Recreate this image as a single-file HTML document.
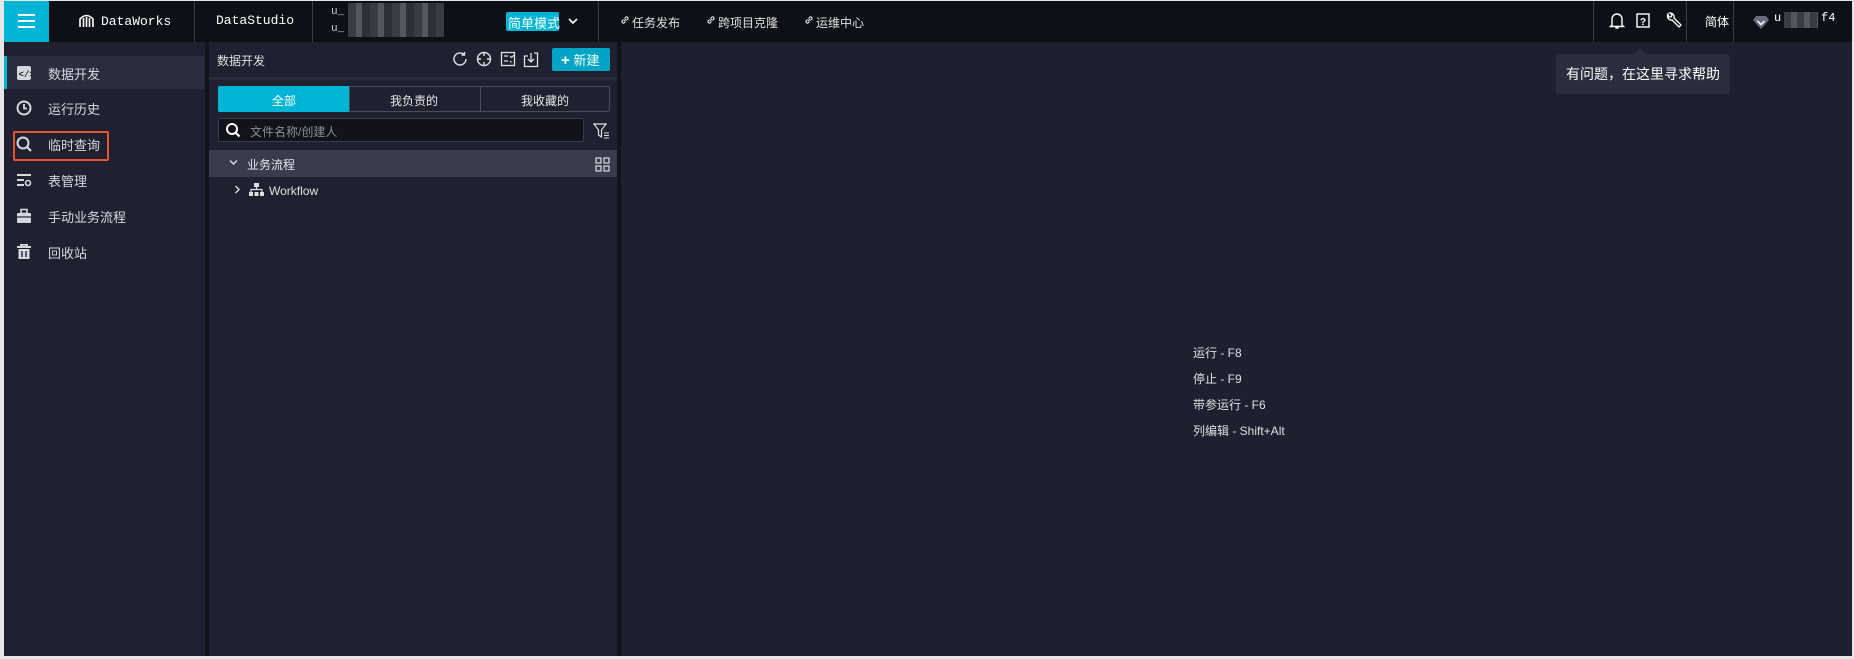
<!DOCTYPE html>
<html><head><meta charset="utf-8"><style>
*{box-sizing:border-box;margin:0;padding:0}
body{width:1854px;height:659px;background:#e6e6e6;font-family:"Liberation Sans","Noto Sans CJK SC",sans-serif;color:#d6d8e0;font-size:12px;position:relative;overflow:hidden}
.abs{position:absolute}
#app{position:absolute;left:4px;top:1px;width:1848px;height:655px;background:#1e2030;overflow:hidden}
#top{position:absolute;left:0;top:0;width:1848px;height:41px;background:#0e1018}
.sep{position:absolute;top:0;width:1px;height:41px;background:#3a3c48}
.t{position:absolute;white-space:nowrap}
.mono{font-family:"Liberation Mono","DejaVu Sans Mono",monospace}
#side{position:absolute;left:0;top:41px;width:201px;height:614px;background:#1f2130}
.it{position:absolute;left:0;width:201px;height:33px;font-size:13px}
.it span{position:absolute;left:44px;top:8px}
.it svg{position:absolute;left:12px;top:9px}
#div1{position:absolute;left:201px;top:41px;width:4px;height:614px;background:#12131b}
#panel{position:absolute;left:205px;top:41px;width:408px;height:614px;background:#1f2130}
#div2{position:absolute;left:613px;top:41px;width:4px;height:614px;background:#12131b}
#ed{position:absolute;left:617px;top:41px;right:0;height:614px;background:#1e2030}
.lk{position:absolute;top:14px}
</style></head><body>
<div id="app">
<div id="top">
  <div class="abs" style="left:0;top:0;width:45px;height:41px;background:#00b4d6"></div>
  <div class="abs" style="left:14px;top:13px;width:17px;height:2px;background:#fff"></div>
  <div class="abs" style="left:14px;top:19px;width:17px;height:2px;background:#fff"></div>
  <div class="abs" style="left:14px;top:25px;width:17px;height:2px;background:#fff"></div>
  <svg class="abs" style="left:75px;top:13px" width="15" height="14" viewBox="0 0 15 14"><path d="M1 13V5Q7.5 -2 14 5V13M4.5 13V4M7.5 13V3M10.5 13V4" stroke="#fff" stroke-width="1.6" fill="none"/></svg>
  <div class="t mono" style="left:97px;top:13px;font-size:13px;color:#fff">DataWorks</div>
  <div class="sep" style="left:190px"></div>
  <div class="t mono" style="left:212px;top:12px;font-size:13px;color:#fff">DataStudio</div>
  <div class="sep" style="left:308px"></div>
  <div class="t mono" style="left:327px;top:5px;font-size:11px;color:#ccc">u_</div>
  <div class="t mono" style="left:327px;top:22px;font-size:11px;color:#ccc">u_</div>
  <div class="abs" style="left:344px;top:2px;width:96px;height:34px;background:repeating-linear-gradient(90deg,#3a3c44 0 8px,#55575e 8px 14px,#2e3038 14px 22px)"></div>
  <div class="abs" style="left:502px;top:11px;width:53px;height:19px;background:#00b4d6;border-radius:2px"></div>
  <div class="t" style="left:504px;top:12px;font-size:13px;color:#fff">简单模式</div>
  <svg class="abs" style="left:564px;top:16px" width="10" height="8"><path d="M1 2l4 4 4-4" stroke="#fff" stroke-width="1.6" fill="none"/></svg>
  <div class="sep" style="left:594px"></div>
  <svg class="lk" style="left:616px" width="10" height="10"><path d="M4 6l2-2M3.5 4.5L2 6a1.6 1.6 0 0 0 2 2l1.5-1.5M6.5 5.5L8 4a1.6 1.6 0 0 0-2-2L4.5 3.5" stroke="#e0e0e0" stroke-width="1.2" fill="none"/></svg>
  <div class="t" style="left:628px;top:13px;font-size:12px;color:#e0e0e0">任务发布</div>
  <svg class="lk" style="left:702px" width="10" height="10"><path d="M4 6l2-2M3.5 4.5L2 6a1.6 1.6 0 0 0 2 2l1.5-1.5M6.5 5.5L8 4a1.6 1.6 0 0 0-2-2L4.5 3.5" stroke="#e0e0e0" stroke-width="1.2" fill="none"/></svg>
  <div class="t" style="left:714px;top:13px;font-size:12px;color:#e0e0e0">跨项目克隆</div>
  <svg class="lk" style="left:800px" width="10" height="10"><path d="M4 6l2-2M3.5 4.5L2 6a1.6 1.6 0 0 0 2 2l1.5-1.5M6.5 5.5L8 4a1.6 1.6 0 0 0-2-2L4.5 3.5" stroke="#e0e0e0" stroke-width="1.2" fill="none"/></svg>
  <div class="t" style="left:812px;top:13px;font-size:12px;color:#e0e0e0">运维中心</div>
  <div class="sep" style="left:1589px"></div>
  <svg class="abs" style="left:1605px;top:11px" width="16" height="18" viewBox="0 0 16 18"><path d="M3 13V7a5 5 0 0 1 10 0v6l1.5 1.5h-13zM6.5 16h3" stroke="#fff" stroke-width="1.4" fill="none"/></svg>
  <svg class="abs" style="left:1632px;top:12px" width="15" height="16"><rect x="1" y="1" width="12" height="13" stroke="#fff" stroke-width="1.4" fill="none"/><text x="4" y="12" font-size="10" fill="#fff" font-family="Liberation Sans" font-weight="bold">?</text></svg>
  <svg class="abs" style="left:1661px;top:11px" width="18" height="18" viewBox="0 0 18 18"><path d="M3 2a4 4 0 0 0 4 6l7 7 2-2-7-7a4 4 0 0 0-4-5l2 2-1 2-2 0z" stroke="#fff" stroke-width="1.3" fill="none"/></svg>
  <div class="sep" style="left:1682px"></div>
  <div class="t" style="left:1701px;top:12px;font-size:12px;color:#fff">简体</div>
  <div class="sep" style="left:1729px"></div>
  <svg class="abs" style="left:1749px;top:14px" width="16" height="14"><path d="M0 5l3-4h10l3 4-8 9z" fill="#6a6c80"/><path d="M4.5 6l3.5 3.5 3.5-3.5" stroke="#fff" stroke-width="1.5" fill="none"/></svg>
  <div class="t mono" style="left:1770px;top:10px;font-size:12px;color:#fff">u</div>
  <div class="abs" style="left:1780px;top:11px;width:34px;height:16px;background:repeating-linear-gradient(90deg,#3a3c44 0 7px,#55575e 7px 13px)"></div>
  <div class="t mono" style="left:1817px;top:10px;font-size:12px;color:#fff">f4</div>
</div>

<div id="side">
  <div class="it" style="top:14px;background:#2b2d3e"><div class="abs" style="left:0;top:0;width:3px;height:33px;background:#00b4d6"></div>
    <svg width="16" height="16"><rect x="1" y="1" width="14" height="14" rx="2" fill="#d6d8e0"/><text x="2.5" y="12" font-size="9" fill="#1f2130" font-family="Liberation Mono" font-weight="bold">&lt;/&gt;</text></svg><span>数据开发</span></div>
  <div class="it" style="top:49px"><svg width="16" height="16"><circle cx="8" cy="8" r="6.5" stroke="#d6d8e0" stroke-width="2" fill="none"/><path d="M8 4v4.5h3" stroke="#d6d8e0" stroke-width="1.8" fill="none"/></svg><span>运行历史</span></div>
  <div class="it" style="top:85px"><svg width="16" height="16"><circle cx="7" cy="7" r="5.5" stroke="#d6d8e0" stroke-width="2" fill="none"/><path d="M11 11l4 4" stroke="#d6d8e0" stroke-width="2.2"/></svg><span>临时查询</span></div>
  <div class="abs" style="left:9px;top:89px;width:96px;height:30px;border:2px solid #e8542e;border-radius:2px"></div>
  <div class="it" style="top:121px"><svg width="16" height="16"><path d="M1 3h14M1 8h7M1 13h7" stroke="#d6d8e0" stroke-width="2"/><circle cx="12" cy="11" r="2.5" stroke="#d6d8e0" stroke-width="1.6" fill="none"/></svg><span>表管理</span></div>
  <div class="it" style="top:157px"><svg width="16" height="16"><rect x="1" y="5" width="14" height="10" rx="1" fill="#d6d8e0"/><rect x="5" y="1.5" width="6" height="4" stroke="#d6d8e0" stroke-width="1.6" fill="none"/><path d="M1 9h14" stroke="#1f2130" stroke-width="1.2"/></svg><span>手动业务流程</span></div>
  <div class="it" style="top:193px"><svg width="16" height="16"><path d="M1 3h14M5 2V0.8h6V2" stroke="#d6d8e0" stroke-width="2" fill="none"/><rect x="2.5" y="5" width="11" height="10" fill="#d6d8e0"/><path d="M6 7v6M10 7v6" stroke="#1f2130" stroke-width="1.4"/></svg><span>回收站</span></div>
</div>
<div class="abs" style="left:-3px;top:293px;width:3px;height:83px;background:#ff7a00"></div>
<div id="div1"></div>

<div id="panel">
  <div class="t" style="left:8px;top:10px;font-size:12px;color:#e0e0e0">数据开发</div>
  <svg class="abs" style="left:243px;top:9px" width="16" height="16"><path d="M14 8a6 6 0 1 1-2-4.5M12.5 1v3h-3" stroke="#e0e0e0" stroke-width="1.4" fill="none"/></svg>
  <svg class="abs" style="left:267px;top:9px" width="16" height="16"><circle cx="8" cy="8" r="6.5" stroke="#e0e0e0" stroke-width="1.4" fill="none"/><path d="M8 1v4M8 11v4M1 8h4M11 8h4" stroke="#e0e0e0" stroke-width="1.4"/></svg>
  <svg class="abs" style="left:291px;top:9px" width="16" height="16"><rect x="1.5" y="1.5" width="13" height="13" stroke="#e0e0e0" stroke-width="1.3" fill="none"/><path d="M4 5h4M10 5l1.5 1.5L14 4M4 10h4M10 10l1.5 1.5" stroke="#e0e0e0" stroke-width="1.2" fill="none"/></svg>
  <svg class="abs" style="left:314px;top:8px" width="16" height="18"><path d="M5 6H1.5v10.5h13V3H11M8 3v9M5 9l3 3 3-3" stroke="#e0e0e0" stroke-width="1.3" fill="none"/></svg>
  <div class="abs" style="left:343px;top:6px;width:58px;height:23px;background:#00a4c4;border-radius:2px"></div>
  <div class="t" style="left:352px;top:8px;font-size:13px;color:#fff"><b style="font-size:15px">+</b> 新建</div>
  <div class="abs" style="left:0;top:35px;width:408px;height:3px;background:#2a2c3a"></div>
  <div class="abs" style="left:9px;top:44px;width:392px;height:26px;border:1px solid #4a4c5c;border-radius:2px"></div>
  <div class="abs" style="left:9px;top:44px;width:131px;height:26px;background:#00b4d6;border-radius:2px 0 0 2px"></div>
  <div class="abs" style="left:140px;top:45px;width:1px;height:24px;background:#4a4c5c"></div>
  <div class="abs" style="left:271px;top:45px;width:1px;height:24px;background:#4a4c5c"></div>
  <div class="t" style="left:63px;top:50px;color:#fff">全部</div>
  <div class="t" style="left:181px;top:50px;color:#e8e8e8">我负责的</div>
  <div class="t" style="left:312px;top:50px;color:#e8e8e8">我收藏的</div>
  <div class="abs" style="left:9px;top:76px;width:366px;height:24px;background:#11121a;border:1px solid #3a3c4a;border-radius:2px"></div>
  <svg class="abs" style="left:16px;top:80px" width="16" height="16"><circle cx="7" cy="7" r="5" stroke="#fff" stroke-width="2" fill="none"/><path d="M10.5 10.5l4 4" stroke="#fff" stroke-width="2.2"/></svg>
  <div class="t" style="left:41px;top:81px;color:#8a8c98">文件名称/创建人</div>
  <svg class="abs" style="left:384px;top:81px" width="17" height="16"><path d="M1 1h12l-4.5 6v7l-3-2V7z" stroke="#e0e0e0" stroke-width="1.2" fill="none"/><path d="M11 10h5M11 12.5h5M11 15h5" stroke="#e0e0e0" stroke-width="1"/></svg>
  <div class="abs" style="left:0;top:108px;width:408px;height:27px;background:#3a3c4e"></div>
  <svg class="abs" style="left:20px;top:117px" width="9" height="7"><path d="M1 1.5l3.5 3.5 3.5-3.5" stroke="#ddd" stroke-width="1.4" fill="none"/></svg>
  <div class="t" style="left:38px;top:114px;color:#e8e8e8">业务流程</div>
  <svg class="abs" style="left:386px;top:115px" width="15" height="15"><g stroke="#ddd" stroke-width="1.2" fill="none"><rect x="1" y="1" width="5" height="5"/><rect x="9" y="1" width="5" height="5"/><rect x="1" y="9" width="5" height="5"/><rect x="9" y="9" width="5" height="5"/></g></svg>
  <svg class="abs" style="left:25px;top:143px" width="7" height="9"><path d="M1.5 1l3.5 3.5L1.5 8" stroke="#ddd" stroke-width="1.4" fill="none"/></svg>
  <svg class="abs" style="left:40px;top:141px" width="15" height="14"><g fill="#ddd"><rect x="5" y="0" width="5" height="4"/><rect x="0" y="9" width="4" height="4"/><rect x="5.5" y="9" width="4" height="4"/><rect x="11" y="9" width="4" height="4"/></g><path d="M7.5 4v3M2 9V6.5h11V9" stroke="#ddd" stroke-width="1.2" fill="none"/></svg>
  <div class="t" style="left:60px;top:142px;font-size:12px;color:#e0e0e0">Workflow</div>
</div>
<div id="div2"></div>
<div id="ed">
  <div class="t" style="left:572px;top:302px;color:#e0e0e0">运行 - F8</div>
  <div class="t" style="left:572px;top:328px;color:#e0e0e0">停止 - F9</div>
  <div class="t" style="left:572px;top:354px;color:#e0e0e0">带参运行 - F6</div>
  <div class="t" style="left:572px;top:380px;color:#e0e0e0">列编辑 - Shift+Alt</div>
</div>
<div class="abs" style="left:1552px;top:53px;width:174px;height:40px;background:#2b2d3e;border-radius:3px"></div>
<div class="abs" style="left:1630px;top:47px;width:0;height:0;border-left:6px solid transparent;border-right:6px solid transparent;border-bottom:7px solid #2b2d3e"></div>
<div class="t" style="left:1562px;top:63px;font-size:14px;color:#fff">有问题，在这里寻求帮助</div>
</div>
</body></html>
